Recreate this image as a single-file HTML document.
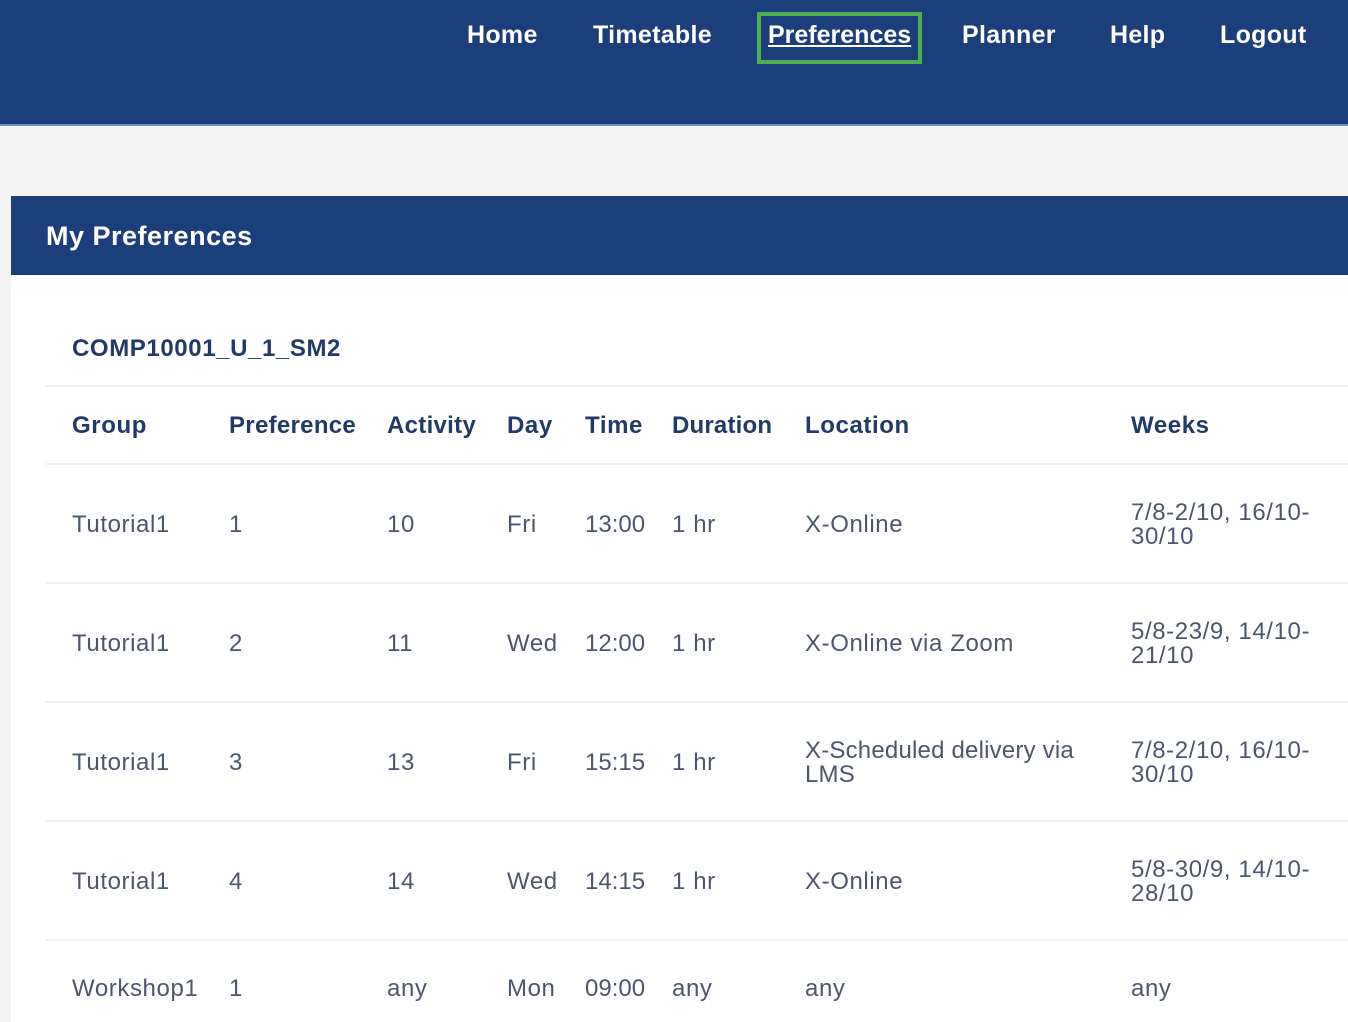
<!DOCTYPE html>
<html><head><meta charset="utf-8"><style>
*{margin:0;padding:0;box-sizing:border-box}
body{width:1348px;height:1022px;overflow:hidden;background:#f4f4f4;font-family:"Liberation Sans",sans-serif;position:relative}
.top{position:absolute;left:0;top:0;width:1348px;height:126px;background:#1c3f7b;border-bottom:2px solid #6f8fc0}
.nav{position:absolute;top:20px;color:#fff;font-weight:bold;font-size:25px;line-height:30px;white-space:nowrap;letter-spacing:0.3px}
.box{position:absolute;left:757px;top:12px;width:165px;height:52px;border:4px solid #4caf50}
.panel{position:absolute;left:11px;top:196px;width:1337px;height:826px;background:#fff}
.ph{position:absolute;left:11px;top:196px;width:1337px;height:79px;background:#1c3f7b}
.t{position:absolute;white-space:nowrap;font-size:24px;letter-spacing:0.6px}
.h{color:#223a66;font-weight:bold}
.c{color:#4c566d;line-height:28px}
.c2{color:#4c566d;line-height:24px}
.line{position:absolute;left:46px;width:1302px;height:2px;background:#f0f0f0}
</style></head><body>
<div class="top"></div>
<div class="nav" style="left:467px">Home</div>
<div class="nav" style="left:593px">Timetable</div>
<div class="nav" style="left:768px;text-decoration:underline;letter-spacing:0">Preferences</div>
<div class="box"></div>
<div class="nav" style="left:962px">Planner</div>
<div class="nav" style="left:1110px">Help</div>
<div class="nav" style="left:1220px">Logout</div>
<div class="panel"></div>
<div class="ph"></div>
<div class="t" style="left:46px;top:220px;color:#fff;font-weight:bold;font-size:27px;letter-spacing:0.5px;line-height:32px">My Preferences</div>
<div class="t h" style="left:72px;top:335px;line-height:28px">COMP10001_U_1_SM2</div>
<div class="line" style="top:385px"></div>
<div class="t h" style="left:72px;top:412px;line-height:28px">Group</div>
<div class="t h" style="left:229px;top:412px;line-height:28px;letter-spacing:0.3px">Preference</div>
<div class="t h" style="left:387px;top:412px;line-height:28px;letter-spacing:0.3px">Activity</div>
<div class="t h" style="left:507px;top:412px;line-height:28px">Day</div>
<div class="t h" style="left:585px;top:412px;line-height:28px">Time</div>
<div class="t h" style="left:672px;top:412px;line-height:28px;letter-spacing:0.2px">Duration</div>
<div class="t h" style="left:805px;top:412px;line-height:28px">Location</div>
<div class="t h" style="left:1131px;top:412px;line-height:28px">Weeks</div>
<div class="line" style="top:463px"></div>

<div class="t c" style="left:72px;top:511px">Tutorial1</div>
<div class="t c" style="left:229px;top:511px">1</div>
<div class="t c" style="left:387px;top:511px">10</div>
<div class="t c" style="left:507px;top:511px">Fri</div>
<div class="t c" style="left:585px;top:511px;letter-spacing:0">13:00</div>
<div class="t c" style="left:672px;top:511px">1 hr</div>
<div class="t c" style="left:805px;top:511px">X-Online</div>
<div class="t c2" style="left:1131px;top:501px">7/8-2/10, 16/10-<br>30/10</div>
<div class="line" style="top:582px"></div>

<div class="t c" style="left:72px;top:630px">Tutorial1</div>
<div class="t c" style="left:229px;top:630px">2</div>
<div class="t c" style="left:387px;top:630px">11</div>
<div class="t c" style="left:507px;top:630px">Wed</div>
<div class="t c" style="left:585px;top:630px;letter-spacing:0">12:00</div>
<div class="t c" style="left:672px;top:630px">1 hr</div>
<div class="t c" style="left:805px;top:630px">X-Online via Zoom</div>
<div class="t c2" style="left:1131px;top:620px">5/8-23/9, 14/10-<br>21/10</div>
<div class="line" style="top:701px"></div>

<div class="t c" style="left:72px;top:749px">Tutorial1</div>
<div class="t c" style="left:229px;top:749px">3</div>
<div class="t c" style="left:387px;top:749px">13</div>
<div class="t c" style="left:507px;top:749px">Fri</div>
<div class="t c" style="left:585px;top:749px;letter-spacing:0">15:15</div>
<div class="t c" style="left:672px;top:749px">1 hr</div>
<div class="t c2" style="left:805px;top:739px;letter-spacing:0.2px">X-Scheduled delivery via<br>LMS</div>
<div class="t c2" style="left:1131px;top:739px">7/8-2/10, 16/10-<br>30/10</div>
<div class="line" style="top:820px"></div>

<div class="t c" style="left:72px;top:868px">Tutorial1</div>
<div class="t c" style="left:229px;top:868px">4</div>
<div class="t c" style="left:387px;top:868px">14</div>
<div class="t c" style="left:507px;top:868px">Wed</div>
<div class="t c" style="left:585px;top:868px;letter-spacing:0">14:15</div>
<div class="t c" style="left:672px;top:868px">1 hr</div>
<div class="t c" style="left:805px;top:868px">X-Online</div>
<div class="t c2" style="left:1131px;top:858px">5/8-30/9, 14/10-<br>28/10</div>
<div class="line" style="top:939px"></div>

<div class="t c" style="left:72px;top:975px">Workshop1</div>
<div class="t c" style="left:229px;top:975px">1</div>
<div class="t c" style="left:387px;top:975px">any</div>
<div class="t c" style="left:507px;top:975px">Mon</div>
<div class="t c" style="left:585px;top:975px;letter-spacing:0">09:00</div>
<div class="t c" style="left:672px;top:975px">any</div>
<div class="t c" style="left:805px;top:975px">any</div>
<div class="t c" style="left:1131px;top:975px">any</div>
</body></html>
